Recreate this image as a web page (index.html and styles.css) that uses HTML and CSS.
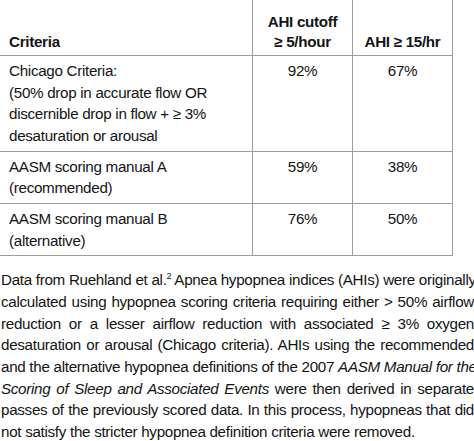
FILE: index.html
```html
<!DOCTYPE html>
<html>
<head>
<meta charset="utf-8">
<link rel="stylesheet" href="styles.css">
</head>
<body>
<table class="tbl">
  <colgroup>
    <col class="c1"><col class="c2"><col class="c3">
  </colgroup>
  <thead>
    <tr>
      <th class="crit">Criteria</th>
      <th class="num">AHI cutoff<br>≥ 5/hour</th>
      <th class="num">AHI ≥ 15/hr</th>
    </tr>
  </thead>
  <tbody>
    <tr>
      <td class="crit">Chicago Criteria:<br>(50% drop in accurate flow OR<br>discernible drop in flow + ≥ 3%<br>desaturation or arousal</td>
      <td class="num">92%</td>
      <td class="num">67%</td>
    </tr>
    <tr>
      <td class="crit">AASM scoring manual A<br>(recommended)</td>
      <td class="num">59%</td>
      <td class="num">38%</td>
    </tr>
    <tr>
      <td class="crit">AASM scoring manual B<br>(alternative)</td>
      <td class="num">76%</td>
      <td class="num">50%</td>
    </tr>
  </tbody>
</table>
<div class="note">
  <span class="ln">Data from Ruehland et al.<sup class="sup">2</sup> Apnea hypopnea indices (AHIs) were originally</span>
  <span class="ln">calculated using hypopnea scoring criteria requiring either &gt; 50% airflow</span>
  <span class="ln">reduction or a lesser airflow reduction with associated ≥ 3% oxygen</span>
  <span class="ln">desaturation or arousal (Chicago criteria). AHIs using the recommended</span>
  <span class="ln">and the alternative hypopnea definitions of the 2007 <i>AASM Manual for the</i></span>
  <span class="ln"><i>Scoring of Sleep and Associated Events</i> were then derived in separate</span>
  <span class="ln">passes of the previously scored data. In this process, hypopneas that did</span>
  <span class="ln last">not satisfy the stricter hypopnea definition criteria were removed.</span>
</div>
</body>
</html>
```

FILE: styles.css
```css
html, body {
  margin: 0;
  padding: 0;
  overflow: hidden;
  background: #ffffff;
}
body {
  width: 474px;
  height: 441px;
  font-family: "Liberation Sans", Arial, sans-serif;
  font-size: 15.2px;
  letter-spacing: -0.3px;
  color: #141414;
}
.tbl {
  border-collapse: separate;
  border-spacing: 0;
  table-layout: fixed;
  width: 453px;
}
.c1 { width: 253px; }
.c2 { width: 100px; }
.c3 { width: 100px; }
.tbl th, .tbl td {
  border-right: 1px solid #9c9c9c;
  border-bottom: 1px solid #9c9c9c;
}
.tbl th {
  font-weight: bold;
  line-height: 19.5px;
  vertical-align: bottom;
  padding: 12px 0 4px 0;
  height: 39px;
}
.tbl td {
  line-height: 21.67px;
  vertical-align: top;
  padding: 4px 0 4px 0;
}
.crit {
  text-align: left;
  padding-left: 9px !important;
}
.num {
  text-align: center;
}
.note {
  width: 473px;
  margin: 13px 0 0 1px;
  line-height: 21.67px;
}
.ln {
  display: block;
  white-space: nowrap;
  text-align: justify;
  text-align-last: justify;
}
.ln.last {
  text-align-last: left;
}
.sup {
  font-size: 9px;
  line-height: 0;
  vertical-align: 6px;
}
```
